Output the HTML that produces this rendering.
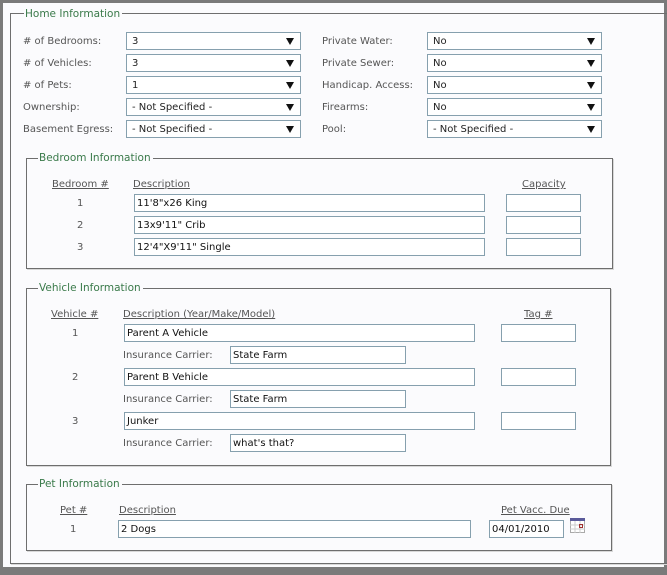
<!DOCTYPE html>
<html><head><style>
*{margin:0;padding:0;box-sizing:border-box}
body{width:667px;height:575px;background:#7a7a7a;position:relative;overflow:hidden;font-family:"DejaVu Sans","Liberation Sans",sans-serif;font-size:10px;color:#555}
#pg{position:absolute;left:3px;top:3px;width:661px;height:564px;background:#fbfbfd}
.a{position:absolute;white-space:nowrap}
.fs{position:absolute;border:1px solid #6e6e6e;box-shadow:1px 1px 0 #d8d8d8}
.lg{position:absolute;background:#fbfbfd;color:#3a7a4a;padding:0 2px 0 1px;font-size:10.5px;line-height:12px}
.in{position:absolute;height:18px;border:1px solid #86a0ae;background:#fff;color:#111;padding-left:2px;padding-top:2px;line-height:14px;white-space:nowrap}
.sel{position:absolute;height:18px;border:1px solid #86a0ae;background:#fff;color:#222;padding-left:5px;padding-top:2px;line-height:14px;white-space:nowrap}
.sel:after{content:"";position:absolute;right:6px;top:5px;border-left:4px solid transparent;border-right:4px solid transparent;border-top:7px solid #111}
.u{text-decoration:underline}
.t{line-height:12px}
</style></head><body>
<div id="pg"></div>
<div class="fs" style="left:10px;top:13px;width:660px;height:551px;border-right:none"></div>
<div class="lg" style="left:24px;top:8px">Home Information</div>

<div class="a t" style="left:23px;top:36px">#&nbsp;of Bedrooms:</div>
<div class="a t" style="left:23px;top:58px">#&nbsp;of Vehicles:</div>
<div class="a t" style="left:23px;top:80px">#&nbsp;of Pets:</div>
<div class="a t" style="left:23px;top:102px">Ownership:</div>
<div class="a t" style="left:23px;top:124px">Basement Egress:</div>
<div class="sel" style="left:126px;top:32px;width:175px">3</div>
<div class="sel" style="left:126px;top:54px;width:175px">3</div>
<div class="sel" style="left:126px;top:76px;width:175px">1</div>
<div class="sel" style="left:126px;top:98px;width:175px">- Not Specified -</div>
<div class="sel" style="left:126px;top:120px;width:175px">- Not Specified -</div>

<div class="a t" style="left:322px;top:36px">Private Water:</div>
<div class="a t" style="left:322px;top:58px">Private Sewer:</div>
<div class="a t" style="left:322px;top:80px">Handicap. Access:</div>
<div class="a t" style="left:322px;top:102px">Firearms:</div>
<div class="a t" style="left:322px;top:124px">Pool:</div>
<div class="sel" style="left:427px;top:32px;width:175px">No</div>
<div class="sel" style="left:427px;top:54px;width:175px">No</div>
<div class="sel" style="left:427px;top:76px;width:175px">No</div>
<div class="sel" style="left:427px;top:98px;width:175px">No</div>
<div class="sel" style="left:427px;top:120px;width:175px">- Not Specified -</div>

<div class="fs" style="left:26px;top:158px;width:587px;height:111px"></div>
<div class="lg" style="left:38px;top:152px">Bedroom Information</div>
<div class="a t u" style="left:52px;top:179px">Bedroom #</div>
<div class="a t u" style="left:133px;top:179px">Description</div>
<div class="a t u" style="left:522px;top:179px">Capacity</div>
<div class="a t" style="left:77px;top:198px">1</div>
<div class="a t" style="left:77px;top:220px">2</div>
<div class="a t" style="left:77px;top:242px">3</div>
<div class="in" style="left:134px;top:194px;width:351px">11'8"x26 King</div>
<div class="in" style="left:134px;top:216px;width:351px">13x9'11" Crib</div>
<div class="in" style="left:134px;top:238px;width:351px">12'4"X9'11" Single</div>
<div class="in" style="left:506px;top:194px;width:75px"></div>
<div class="in" style="left:506px;top:216px;width:75px"></div>
<div class="in" style="left:506px;top:238px;width:75px"></div>

<div class="fs" style="left:26px;top:288px;width:585px;height:178px"></div>
<div class="lg" style="left:38px;top:282px">Vehicle Information</div>
<div class="a t u" style="left:51px;top:309px">Vehicle #</div>
<div class="a t u" style="left:123px;top:309px">Description (Year/Make/Model)</div>
<div class="a t u" style="left:524px;top:309px">Tag #</div>
<div class="a t" style="left:72px;top:328px">1</div>
<div class="a t" style="left:72px;top:372px">2</div>
<div class="a t" style="left:72px;top:416px">3</div>
<div class="in" style="left:124px;top:324px;width:351px">Parent A Vehicle</div>
<div class="in" style="left:124px;top:368px;width:351px">Parent B Vehicle</div>
<div class="in" style="left:124px;top:412px;width:351px">Junker</div>
<div class="in" style="left:501px;top:324px;width:75px"></div>
<div class="in" style="left:501px;top:368px;width:75px"></div>
<div class="in" style="left:501px;top:412px;width:75px"></div>
<div class="a t" style="left:123px;top:350px">Insurance Carrier:</div>
<div class="a t" style="left:123px;top:394px">Insurance Carrier:</div>
<div class="a t" style="left:123px;top:438px">Insurance Carrier:</div>
<div class="in" style="left:230px;top:346px;width:176px">State Farm</div>
<div class="in" style="left:230px;top:390px;width:176px">State Farm</div>
<div class="in" style="left:230px;top:434px;width:176px">what's that?</div>

<div class="fs" style="left:26px;top:484px;width:586px;height:67px"></div>
<div class="lg" style="left:38px;top:478px">Pet Information</div>
<div class="a t u" style="left:60px;top:505px">Pet #</div>
<div class="a t u" style="left:119px;top:505px">Description</div>
<div class="a t u" style="left:501px;top:505px">Pet Vacc. Due</div>
<div class="a t" style="left:70px;top:524px">1</div>
<div class="in" style="left:118px;top:520px;width:353px">2 Dogs</div>
<div class="in" style="left:489px;top:520px;width:75px">04/01/2010</div>
<svg class="a" style="left:570px;top:518px" width="15" height="15" viewBox="0 0 15 15">
<rect x="0.5" y="0.5" width="14" height="14" fill="#fff" stroke="#aaa"/>
<rect x="0" y="0" width="15" height="3" fill="#5a5a9a"/>
<path d="M5 3V15M10 3V15M0 7H15M0 11H15" stroke="#ccc" stroke-width="1"/>
<rect x="9.5" y="6.5" width="3" height="3" fill="none" stroke="#a03030"/>
</svg>
</body></html>
